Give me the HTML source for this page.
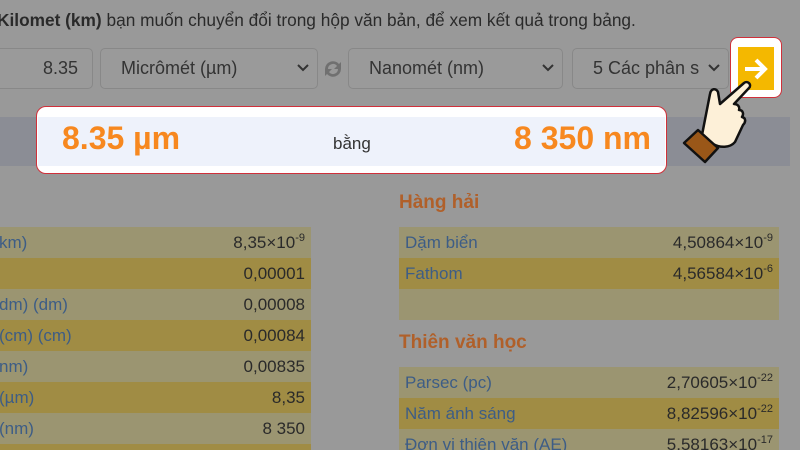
<!DOCTYPE html>
<html><head><meta charset="utf-8"><style>
*{margin:0;padding:0;box-sizing:border-box}
html,body{width:800px;height:450px;overflow:hidden}
body{background:#999;font-family:"Liberation Sans",sans-serif;position:relative;color:#2a2a2a}
.a{position:absolute}
.sel{position:absolute;top:48px;height:41px;border:1px solid #888;border-radius:5px;background:#9a9a9a;font-size:18px;color:#333;line-height:39px;padding-left:20px}
.sel svg{position:absolute;right:8px;top:14px}
.row{position:absolute;height:31px;font-size:17px;line-height:31px;padding:0 6px}
.l{background:#9b9571}.d{background:#a08c44}
.row .k{color:#3d5d86}.row .v{position:absolute;right:6px;top:0}
.lt .k{margin-left:-7px}
sup{font-size:11px;vertical-align:7px;line-height:0}
h3{position:absolute;color:#b0602a;font-size:19px;font-weight:bold}
</style></head><body>
<div class="a" style="left:-3px;top:10px;font-size:17.3px;color:#2a2a2a;white-space:nowrap"><b>Kilomet (km)</b> bạn muốn chuyển đổi trong hộp văn bản, để xem kết quả trong bảng.</div>
<div class="sel" style="left:-10px;width:103px;text-align:right;padding-right:14px">8.35</div>
<div class="sel" style="left:100px;width:218px">Micrômét (µm)<svg width="12" height="10"><path d="M1 2l5 5 5-5" stroke="#333" stroke-width="2" fill="none"/></svg></div>
<svg class="a" style="left:321px;top:56px" width="24" height="26" viewBox="0 0 24 26"><path d="M4 13a8 8 0 0 1 14-5l2-2v7h-7l3-3a5 5 0 0 0-9 3z" fill="#707070"/><path d="M20 13a8 8 0 0 1-14 5l-2 2v-7h7l-3 3a5 5 0 0 0 9-3z" fill="#707070"/></svg>
<div class="sel" style="left:348px;width:215px">Nanomét (nm)<svg width="12" height="10"><path d="M1 2l5 5 5-5" stroke="#333" stroke-width="2" fill="none"/></svg></div>
<div class="sel" style="left:572px;width:157px">5 Các phân s<svg width="12" height="10"><path d="M1 2l5 5 5-5" stroke="#333" stroke-width="2" fill="none"/></svg></div>
<div class="a" style="left:730px;top:37px;width:52px;height:61px;background:#fff;border:1.5px solid #d0303a;border-radius:8px"></div>
<div class="a" style="left:738px;top:47px;width:36px;height:43px;background:#f4b800"></div>
<svg class="a" style="left:742px;top:56px" width="30" height="26"><path d="M3 13h20M14 4l9 9-9 9" stroke="#fff" stroke-width="4" fill="none"/></svg>
<div class="a" style="left:0;top:117px;width:790px;height:49px;background:#8b8d95"></div>
<div class="a" style="left:36px;top:106px;width:631px;height:68px;background:#fff;border:1.5px solid #d0303a;border-radius:10px"></div>
<div class="a" style="left:38px;top:117px;width:627px;height:49px;background:#eef2fb"></div>
<div class="a" style="left:62px;top:120px;font-size:32px;font-weight:bold;color:#f7881f">8.35 µm</div>
<div class="a" style="left:333px;top:134px;font-size:17px;color:#333">bằng</div>
<div class="a" style="right:149px;top:120px;font-size:32px;font-weight:bold;color:#f7881f">8 350 nm</div>
<svg class="a" style="left:680px;top:80px" width="80" height="90" viewBox="0 0 80 90"><path d="M22 55L30 14C31 8 36 8 38 12L40 24L64 3C68 0 72 5 69 8L54 24C58 24 60 27 59 30C63 30 64 34 62 37C66 38 66 42 63 45L55 62C50 68 40 68 33 64Z" fill="#fdf0d8" stroke="#111" stroke-width="2.5" stroke-linejoin="round"/><path d="M4 63L18 50L38 68L25 82Z" fill="#9a5718" stroke="#111" stroke-width="2.5" stroke-linejoin="round"/></svg>
<div class="row l lt" style="left:0;top:227px;width:311px"><span class="k">km)</span><span class="v">8,35×10<sup>-9</sup></span></div>
<div class="row d lt" style="left:0;top:258px;width:311px"><span class="v">0,00001</span></div>
<div class="row l lt" style="left:0;top:289px;width:311px"><span class="k">dm) (dm)</span><span class="v">0,00008</span></div>
<div class="row d lt" style="left:0;top:320px;width:311px"><span class="k">(cm) (cm)</span><span class="v">0,00084</span></div>
<div class="row l lt" style="left:0;top:351px;width:311px"><span class="k">nm)</span><span class="v">0,00835</span></div>
<div class="row d lt" style="left:0;top:382px;width:311px"><span class="k">(µm)</span><span class="v">8,35</span></div>
<div class="row l lt" style="left:0;top:413px;width:311px"><span class="k">(nm)</span><span class="v">8 350</span></div>
<div class="row d" style="left:0;top:444px;width:311px;height:6px"></div>
<h3 style="left:399px;top:192px">Hàng hải</h3>
<div class="row l" style="left:399px;top:227px;width:380px"><span class="k">Dặm biển</span><span class="v">4,50864×10<sup>-9</sup></span></div>
<div class="row d" style="left:399px;top:258px;width:380px"><span class="k">Fathom</span><span class="v">4,56584×10<sup>-6</sup></span></div>
<div class="row l" style="left:399px;top:289px;width:380px"></div>
<h3 style="left:399px;top:332px">Thiên văn học</h3>
<div class="row l" style="left:399px;top:367px;width:380px"><span class="k">Parsec (pc)</span><span class="v">2,70605×10<sup>-22</sup></span></div>
<div class="row d" style="left:399px;top:398px;width:380px"><span class="k">Năm ánh sáng</span><span class="v">8,82596×10<sup>-22</sup></span></div>
<div class="row l" style="left:399px;top:429px;width:380px;height:21px"><span class="k">Đơn vị thiên văn (AE)</span><span class="v">5,58163×10<sup>-17</sup></span></div>
</body></html>
